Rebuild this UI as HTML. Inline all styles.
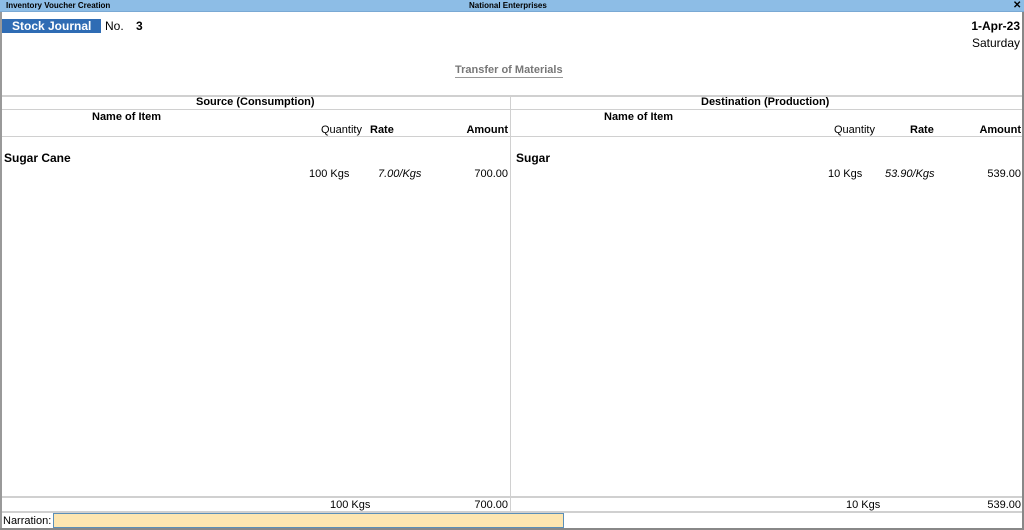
<!DOCTYPE html>
<html><head><style>
*{margin:0;padding:0;box-sizing:border-box}
body{width:1024px;height:530px;overflow:hidden;background:#fff;font-family:"Liberation Sans",Arial,sans-serif;font-size:11px;color:#000;position:relative}
.a{position:absolute;white-space:nowrap}
.b{font-weight:bold}
.r{text-align:right}
.hl{position:absolute;height:1px;background:#d0d0d0}
</style></head><body>
<div class="a" style="left:0;top:0;width:1024px;height:12px;background:#8dbde6;border-bottom:1px solid #7aa9d4"></div>
<div class="a b" style="left:6px;top:1px;font-size:8px">Inventory Voucher Creation</div>
<div class="a b" style="left:469px;top:1px;font-size:8px">National Enterprises</div>
<div class="a b" style="left:1013px;top:0px;font-size:10px">✕</div>
<div class="a" style="left:0;top:12px;width:2px;height:518px;background:#999"></div>
<div class="a" style="left:1022px;top:12px;width:2px;height:518px;background:#888"></div>
<div class="a" style="left:0;top:528px;width:1024px;height:2px;background:#888"></div>

<div class="a b" style="left:2px;top:19px;width:99px;height:14px;background:#2f6cb4;color:#fff;font-size:12px;padding-left:10px;line-height:14px">Stock Journal</div>
<div class="a" style="left:105px;top:19px;font-size:12px">No.</div>
<div class="a b" style="left:136px;top:19px;font-size:12px">3</div>
<div class="a b r" style="right:4px;top:19px;font-size:12px">1-Apr-23</div>
<div class="a r" style="right:4px;top:36px;font-size:12px">Saturday</div>
<div class="a b" style="left:455px;top:64px;color:#777;border-bottom:1px solid #999;line-height:13px">Transfer of Materials</div>

<div class="hl" style="left:2px;top:95px;width:1020px;height:2px"></div>
<div class="hl" style="left:2px;top:109px;width:1020px"></div>
<div class="hl" style="left:2px;top:136px;width:1020px"></div>
<div class="hl" style="left:2px;top:496px;width:1020px;height:2px"></div>
<div class="hl" style="left:2px;top:511px;width:1020px;height:2px"></div>
<div class="a" style="left:510px;top:95px;width:1px;height:417px;background:#d0d0d0"></div>

<div class="a b" style="left:196px;top:96px">Source (Consumption)</div>
<div class="a b" style="left:701px;top:96px">Destination (Production)</div>
<div class="a b" style="left:92px;top:111px">Name of Item</div>
<div class="a b" style="left:604px;top:111px">Name of Item</div>
<div class="a" style="left:321px;top:124px">Quantity</div>
<div class="a b" style="left:370px;top:124px">Rate</div>
<div class="a b r" style="right:516px;top:124px">Amount</div>
<div class="a" style="left:834px;top:124px">Quantity</div>
<div class="a b" style="left:910px;top:124px">Rate</div>
<div class="a b r" style="right:3px;top:124px">Amount</div>

<div class="a b" style="left:4px;top:151px;font-size:12px">Sugar Cane</div>
<div class="a" style="left:309px;top:168px">100 Kgs</div>
<div class="a" style="left:378px;top:168px;font-style:italic">7.00/Kgs</div>
<div class="a r" style="right:516px;top:168px">700.00</div>
<div class="a b" style="left:516px;top:151px;font-size:12px">Sugar</div>
<div class="a" style="left:828px;top:168px">10 Kgs</div>
<div class="a" style="left:885px;top:168px;font-style:italic">53.90/Kgs</div>
<div class="a r" style="right:3px;top:168px">539.00</div>

<div class="a" style="left:330px;top:499px">100 Kgs</div>
<div class="a r" style="right:516px;top:499px">700.00</div>
<div class="a" style="left:846px;top:499px">10 Kgs</div>
<div class="a r" style="right:3px;top:499px">539.00</div>

<div class="a" style="left:3px;top:515px">Narration:</div>
<div class="a" style="left:53px;top:513px;width:511px;height:15px;background:#fde6b1;border:1px solid #5b8fb8"></div>
</body></html>
